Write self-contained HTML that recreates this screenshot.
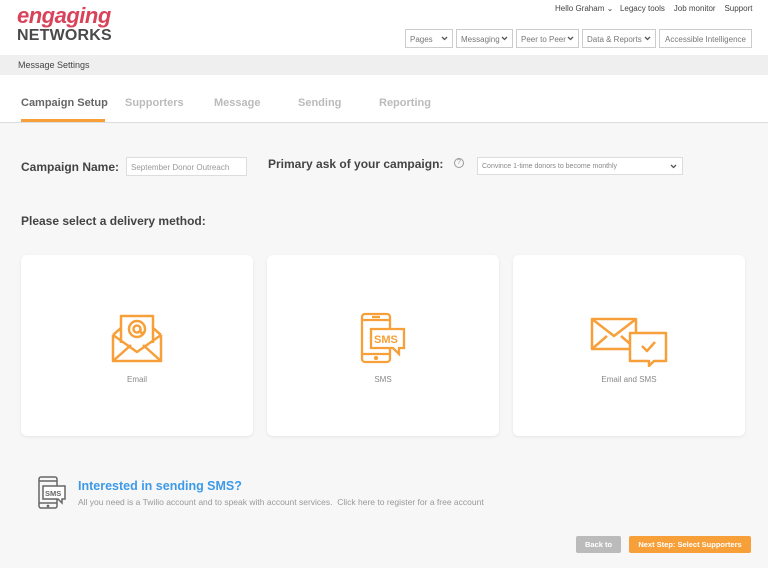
<!DOCTYPE html>
<html><head><style>
*{margin:0;padding:0;box-sizing:border-box}
body{width:768px;height:568px;overflow:hidden;background:#f7f7f7;font-family:"Liberation Sans",Arial,sans-serif;position:relative;color:#555}
.abs{position:absolute}
#hdr{left:0;top:0;width:768px;height:55px;background:#fff}
#bar{left:0;top:55px;width:768px;height:20px;background:#efefef;font-size:9px;color:#444;padding:5px 0 0 18px}
#tabs{left:0;top:75px;width:768px;height:48px;background:#fff;border-bottom:1px solid #ddd}
.tab{position:absolute;top:22px;font-size:11px;font-weight:bold;color:#bbb}
.nb{position:absolute;top:29px;height:19px;border:1px solid #ccc;background:#fff;font-size:8px;color:#777;padding:5px 4px;white-space:nowrap}
.nb svg{position:absolute;right:4px;top:6px}
.card{position:absolute;top:255px;width:232px;height:181px;background:#fff;border-radius:6px;box-shadow:0 1px 3px rgba(0,0,0,.08)}
.card .lb{position:absolute;top:120px;width:100%;text-align:center;font-size:8px;color:#888}
.card svg{position:absolute}
</style></head><body>
<div id="hdr" class="abs">
 <div class="abs" style="left:17px;top:3px;font-size:22px;font-weight:bold;font-style:italic;color:#d8435a;letter-spacing:-0.5px">engaging</div>
 <div class="abs" style="left:17px;top:27px;font-size:16px;font-weight:bold;color:#4a4a4a;letter-spacing:0.2px">NETWORKS</div>
 <div class="abs" style="left:555px;top:4px;font-size:8px;color:#444;white-space:nowrap">Hello Graham <span style="font-size:8px">&#8964;</span>&nbsp;&nbsp; Legacy tools&nbsp;&nbsp;&nbsp; Job monitor&nbsp;&nbsp;&nbsp; Support</div>
 <div class="nb" style="left:405px;width:48px">Pages<svg width="7" height="5"><path d="M1 1l2.5 2.5L6 1" stroke="#555" stroke-width="1.3" fill="none"/></svg></div>
 <div class="nb" style="left:456px;width:57px">Messaging<svg width="7" height="5"><path d="M1 1l2.5 2.5L6 1" stroke="#555" stroke-width="1.3" fill="none"/></svg></div>
 <div class="nb" style="left:516px;width:63px">Peer to Peer<svg width="7" height="5"><path d="M1 1l2.5 2.5L6 1" stroke="#555" stroke-width="1.3" fill="none"/></svg></div>
 <div class="nb" style="left:582px;width:74px">Data &amp; Reports<svg width="7" height="5"><path d="M1 1l2.5 2.5L6 1" stroke="#555" stroke-width="1.3" fill="none"/></svg></div>
 <div class="nb" style="left:659px;width:93px;text-align:center">Accessible Intelligence</div>
</div>
<div id="bar" class="abs">Message Settings</div>
<div id="tabs" class="abs">
 <div class="tab" style="left:21px;color:#666">Campaign Setup</div>
 <div class="abs" style="left:21px;top:44px;width:84px;height:3px;background:#f7a03a"></div>
 <div class="tab" style="left:125px">Supporters</div>
 <div class="tab" style="left:214px">Message</div>
 <div class="tab" style="left:298px">Sending</div>
 <div class="tab" style="left:379px">Reporting</div>
</div>
<div class="abs" style="left:21px;top:160px;font-size:12px;font-weight:bold;color:#444">Campaign Name:</div>
<div class="abs" style="left:126px;top:157px;width:121px;height:19px;background:#fff;border:1px solid #ddd;font-size:8px;color:#999;padding:5px 4px">September Donor Outreach</div>
<div class="abs" style="left:268px;top:157px;font-size:12px;font-weight:bold;color:#444">Primary ask of your campaign:</div>
<div class="abs" style="left:454px;top:158px;width:10px;height:10px;border:1px solid #999;border-radius:50%;font-size:7px;text-align:center;line-height:8px;color:#999">?</div>
<div class="abs" style="left:477px;top:157px;width:206px;height:18px;background:#fff;border:1px solid #ddd;font-size:7px;color:#888;padding:5px 4px">Convince 1-time donors to become monthly<svg style="position:absolute;right:5px;top:6px" width="7" height="5"><path d="M1 1l2.5 2.5L6 1" stroke="#555" stroke-width="1.3" fill="none"/></svg></div>
<div class="abs" style="left:21px;top:214px;font-size:12px;font-weight:bold;color:#444">Please select a delivery method:</div>

<div class="card" style="left:21px">
 <svg style="left:90px;top:58px" width="52" height="52" viewBox="0 0 52 52" fill="none" stroke="#f7a03a" stroke-width="2.5" stroke-linejoin="round">
  <path d="M2 22v26h48V22"/><path d="M2 22l8-7M50 22l-8-7"/><path d="M10 30V3h32v27"/><path d="M2 48l18-16M50 48L32 32"/><path d="M2 22l24 17 24-17"/>
  <circle cx="26" cy="16" r="8"/><circle cx="26" cy="16" r="3.5"/><path d="M29.5 16v2.5c0 2 3 2 4 0"/>
 </svg>
 <div class="lb">Email</div>
</div>
<div class="card" style="left:267px">
 <svg style="left:93px;top:57px" width="46" height="52" viewBox="0 0 46 52" fill="none" stroke="#f7a03a" stroke-width="2.3">
  <rect x="2" y="2" width="28" height="48" rx="3"/><path d="M2 8h28M2 42h28M12 5h8"/><circle cx="16" cy="46" r="1"/>
  <path d="M11 17h33v19h-5v6l-6-6H11z" fill="#fff"/>
  <text x="14" y="31" font-family="Liberation Sans" font-weight="bold" font-size="11" fill="#f7a03a" stroke="none">SMS</text>
 </svg>
 <div class="lb">SMS</div>
</div>
<div class="card" style="left:513px">
 <svg style="left:77px;top:62px" width="78" height="50" viewBox="0 0 78 50" fill="none" stroke="#f7a03a" stroke-width="2.5" stroke-linejoin="round">
  <rect x="2" y="2" width="44" height="30"/><path d="M2 2l22 17 22-17M2 32l15-13M46 32L31 19"/>
  <path d="M40 16h36v28H64l-5 5v-5H40z" fill="#fff"/><path d="M52 29l5 5 8-9"/>
 </svg>
 <div class="lb">Email and SMS</div>
</div>

<svg class="abs" style="left:37px;top:476px" width="30" height="34" viewBox="0 0 30 34" fill="none" stroke="#666" stroke-width="1.5">
 <rect x="2" y="1" width="18" height="31" rx="2"/><path d="M2 5h18M2 27h18"/><circle cx="11" cy="30" r=".6"/>
 <path d="M6 10h22v13h-3v4l-4-4H6z" fill="#fff"/>
 <text x="8" y="20" font-family="Liberation Sans" font-weight="bold" font-size="7.5" fill="#666" stroke="none">SMS</text>
</svg>
<div class="abs" style="left:78px;top:479px;font-size:12.5px;font-weight:bold;color:#3d9ae8">Interested in sending SMS?</div>
<div class="abs" style="left:78px;top:497px;font-size:8.5px;color:#999;white-space:nowrap">All you need is a Twilio account and to speak with account services.&nbsp; Click here to register for a free account</div>

<div class="abs" style="left:576px;top:536px;width:45px;height:17px;background:#bbb;border-radius:2px;color:#fff;font-size:7.5px;font-weight:bold;text-align:center;line-height:17px">Back to</div>
<div class="abs" style="left:629px;top:536px;width:122px;height:17px;background:#f7a03a;border-radius:2px;color:#fff;font-size:7.5px;font-weight:bold;text-align:center;line-height:17px">Next Step: Select Supporters</div>
</body></html>
